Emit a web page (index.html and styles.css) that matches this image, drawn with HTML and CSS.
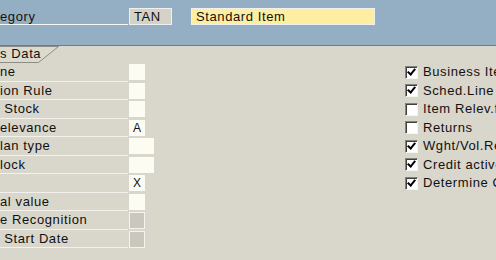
FILE: index.html
```html
<!DOCTYPE html>
<html>
<head>
<meta charset="utf-8">
<link rel="stylesheet" href="styles.css">
</head>
<body>
<div class="page">
  <div class="header">
    <div class="hlabel">egory</div>
    <div class="hfield tan">TAN</div>
    <div class="hfield desc">Standard Item</div>
  </div>
  <div class="divider"></div>
  <div class="content">
    <div class="tab">
      <svg class="tabshape" width="62" height="18" viewBox="0 0 62 18">
        <path d="M-1 0.5 H58.5 L38.5 16.5 H-1" fill="#dcd9cd" stroke="#8e8c84" stroke-width="1"/>
      </svg>
      <span class="tabtext">s Data</span>
    </div>
    <div class="panel">
      <div class="rows">
        <div class="row"><div class="lbl">ne</div><div class="fld"></div></div>
        <div class="row"><div class="lbl">ion Rule</div><div class="fld"></div></div>
        <div class="row"><div class="lbl">&nbsp;Stock</div><div class="fld"></div></div>
        <div class="row"><div class="lbl">elevance</div><div class="fld">A</div></div>
        <div class="row"><div class="lbl">lan type</div><div class="fld wide"></div></div>
        <div class="row"><div class="lbl">lock</div><div class="fld wide"></div></div>
        <div class="row"><div class="lbl"></div><div class="fld">X</div></div>
        <div class="row"><div class="lbl">al value</div><div class="fld"></div></div>
        <div class="row"><div class="lbl">e Recognition</div><div class="fld off"></div></div>
        <div class="row"><div class="lbl">&nbsp;Start Date</div><div class="fld off"></div></div>
      </div>
      <div class="checks">
        <div class="chk"><span class="box on"></span><span class="ctext">Business Item</span></div>
        <div class="chk"><span class="box on"></span><span class="ctext">Sched.Line Allowed</span></div>
        <div class="chk"><span class="box"></span><span class="ctext">Item Relev.for Dlv</span></div>
        <div class="chk"><span class="box"></span><span class="ctext">Returns</span></div>
        <div class="chk"><span class="box on"></span><span class="ctext">Wght/Vol.Relevant</span></div>
        <div class="chk"><span class="box on"></span><span class="ctext">Credit active</span></div>
        <div class="chk"><span class="box on"></span><span class="ctext">Determine Cost</span></div>
      </div>
    </div>
  </div>
</div>
</body>
</html>
```
FILE: styles.css
```css
html, body {
  margin: 0;
  padding: 0;
}
body {
  width: 496px;
  height: 260px;
  overflow: hidden;
  background: #d9d6cb;
  font-family: "Liberation Sans", Arial, sans-serif;
  font-size: 13px;
  letter-spacing: 0.6px;
  color: #111;
}
.page {
  width: 496px;
  height: 260px;
  overflow: hidden;
}
.header {
  height: 45px;
  background: #94aec4;
  display: flex;
  align-items: flex-start;
  padding-top: 8px;
  box-sizing: border-box;
}
.hlabel {
  width: 128px;
  height: 17px;
  box-sizing: border-box;
  border-bottom: 1px solid #f4f6f7;
  line-height: 17px;
  white-space: nowrap;
  overflow: hidden;
}
.hfield {
  height: 17px;
  box-sizing: border-box;
  border: 1px solid #eef1ef;
  line-height: 15px;
  padding-left: 4px;
  white-space: nowrap;
}
.tan {
  margin-left: 1px;
  width: 43px;
  background: #d5d2c8;
}
.desc {
  margin-left: 19px;
  width: 184px;
  background: #fdeea2;
}
.divider {
  height: 1px;
  background: #6d7d8a;
}
.content {
  background: #d9d6cb;
}
.tab {
  position: relative;
  width: 62px;
  height: 16px;
}
.tabshape {
  position: absolute;
  left: 0;
  top: 0;
}
.tabtext {
  position: relative;
  display: block;
  line-height: 15px;
  white-space: nowrap;
}
.panel {
  display: flex;
  padding-top: 1px;
}
.rows {
  width: 160px;
  display: flex;
  flex-direction: column;
}
.row {
  height: 18.5px;
  display: flex;
  align-items: flex-start;
}
.lbl {
  width: 128px;
  height: 18.5px;
  box-sizing: border-box;
  border-bottom: 1px solid #f2f1eb;
  line-height: 18px;
  white-space: nowrap;
  overflow: hidden;
}
.fld {
  margin-left: 1px;
  margin-top: 1px;
  width: 16px;
  height: 16px;
  background: #fdfcf3;
  font-size: 12px;
  line-height: 16px;
  text-align: center;
  letter-spacing: 0;
}
.fld.wide {
  width: 25px;
}
.fld.off {
  background: #cac7bf;
  box-sizing: border-box;
  width: 16px;
  height: 17px;
  margin-top: 1px;
  border: 1px solid #f4f3ef;
}
.checks {
  margin-left: 251px;
  display: flex;
  flex-direction: column;
}
.chk {
  height: 18.5px;
  display: flex;
  align-items: center;
  white-space: nowrap;
}
.box {
  width: 13px;
  height: 13px;
  box-sizing: border-box;
  background: #fff;
  border-top: 1px solid #84827c;
  border-left: 1px solid #84827c;
  border-right: 1px solid #f6f5f0;
  border-bottom: 1px solid #f6f5f0;
  box-shadow: inset 1px 1px 0 #404040;
  position: relative;
  flex: none;
}
.box.on::after {
  content: "";
  position: absolute;
  left: 3px;
  top: 0px;
  width: 3px;
  height: 6px;
  border-right: 2.5px solid #000;
  border-bottom: 2.5px solid #000;
  transform: rotate(40deg);
}
.ctext {
  margin-left: 5px;
  line-height: 18px;
}
```
